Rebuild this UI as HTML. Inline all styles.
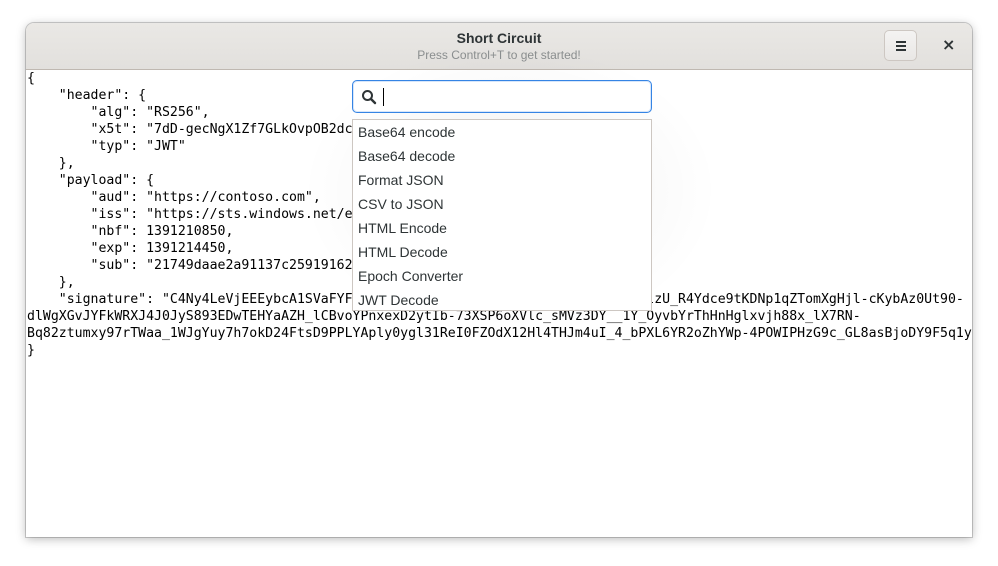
<!DOCTYPE html>
<html><head><meta charset="utf-8"><style>
html,body{margin:0;padding:0;width:998px;height:566px;background:#fff;overflow:hidden;position:relative}
.win{position:absolute;left:26px;top:23px;width:946px;height:514px;border-radius:8px 8px 0 0;box-shadow:0 2px 10px rgba(0,0,0,.28),0 0 0 1px rgba(0,0,0,.18);overflow:hidden;background:#fff}
.hdr{position:absolute;left:0;top:0;width:946px;height:46px;background:linear-gradient(#eae8e5,#e2e0dd);border-bottom:1px solid #bfb8b1}
.t1{position:absolute;left:0;width:946px;text-align:center;top:7px;font:bold 14px "Liberation Sans",sans-serif;color:#2e3436}
.t2{position:absolute;left:0;width:946px;text-align:center;top:25px;font:12px "Liberation Sans",sans-serif;color:#8a8e8f}
.menu{position:absolute;left:858px;top:7px;width:33px;height:31px;border:1px solid #cdc7c2;border-radius:5px;background:linear-gradient(#f4f3f2,#e9e7e5);box-sizing:border-box}
.menu i{position:absolute;left:11px;width:10px;height:2px;background:#2e3436}
.close{position:absolute;left:916px;top:12px;font:bold 16px "DejaVu Sans",sans-serif;color:#2e3436}
pre{position:absolute;left:1px;top:47px;margin:0;font-family:"DejaVu Sans Mono",monospace;font-size:13.2px;line-height:17px;color:#000;white-space:pre}
.glow{position:absolute;left:300px;top:40px;width:420px;height:300px;background:radial-gradient(ellipse at center,rgba(0,0,0,.06),rgba(0,0,0,0) 70%)}
.entry{position:absolute;left:352px;top:80px;width:300px;height:33px;box-sizing:border-box;border:1px solid #3584e4;border-radius:5px;background:#fff;box-shadow:0 0 0 1px rgba(53,132,228,.2) inset}
.cur{position:absolute;left:30px;top:7px;width:1px;height:18px;background:#000}
.list{position:absolute;left:352px;top:119px;width:300px;height:192px;box-sizing:border-box;border:1px solid #cdc7c2;background:#fff}
.list div{height:24px;line-height:24px;padding-left:5px;font:14px/25px "Liberation Sans",sans-serif;color:#2e3436}
</style></head><body>
<div class="win">
<div class="hdr"><div class="t1">Short Circuit</div><div class="t2">Press Control+T to get started!</div>
<div class="menu"><i style="top:10px"></i><i style="top:14px"></i><i style="top:18px"></i></div>
<div class="close">×</div></div>
<pre>{
    "header": {
        "alg": "RS256",
        "x5t": "7dD-gecNgX1Zf7GLkOvpOB2dcVCfz0ZUO6R9LQ9VjZk",
        "typ": "JWT"
    },
    "payload": {
        "aud": "https://contoso.com",
        "iss": "https://sts.windows.net/e481747f-5da7-4538-cbbe-67e57f7d214e/",
        "nbf": 1391210850,
        "exp": 1391214450,
        "sub": "21749daae2a91137c259191622fa1"
    },
    "signature": "C4Ny4LeVjEEEybcA1SVaFYFS6nH-Ezae_RrTXUYInjXGt-vBOkAa2ryb-kpOlzU_R4Ydce9tKDNp1qZTomXgHjl-cKybAz0Ut90-
dlWgXGvJYFkWRXJ4J0JyS893EDwTEHYaAZH_lCBvoYPnxexD2ytIb-73XSP6oXVlc_sMVz3DY__1Y_OyvbYrThHnHglxvjh88x_lX7RN-
Bq82ztumxy97rTWaa_1WJgYuy7h7okD24FtsD9PPLYAply0ygl31ReI0FZOdX12Hl4THJm4uI_4_bPXL6YR2oZhYWp-4POWIPHzG9c_GL8asBjoDY9F5q1y"
}</pre>
</div>
<div class="glow"></div>
<div class="entry">
<svg style="position:absolute;left:8px;top:8px" width="16" height="16" viewBox="0 0 16 16"><circle cx="6.5" cy="6.5" r="4.5" fill="none" stroke="#2e3436" stroke-width="2"/><path d="M10 10l4 4" stroke="#2e3436" stroke-width="2.4" stroke-linecap="round"/></svg>
<div class="cur"></div></div>
<div class="list">
<div>Base64 encode</div><div>Base64 decode</div><div>Format JSON</div><div>CSV to JSON</div><div>HTML Encode</div><div>HTML Decode</div><div>Epoch Converter</div><div>JWT Decode</div>
</div>
</body></html>
